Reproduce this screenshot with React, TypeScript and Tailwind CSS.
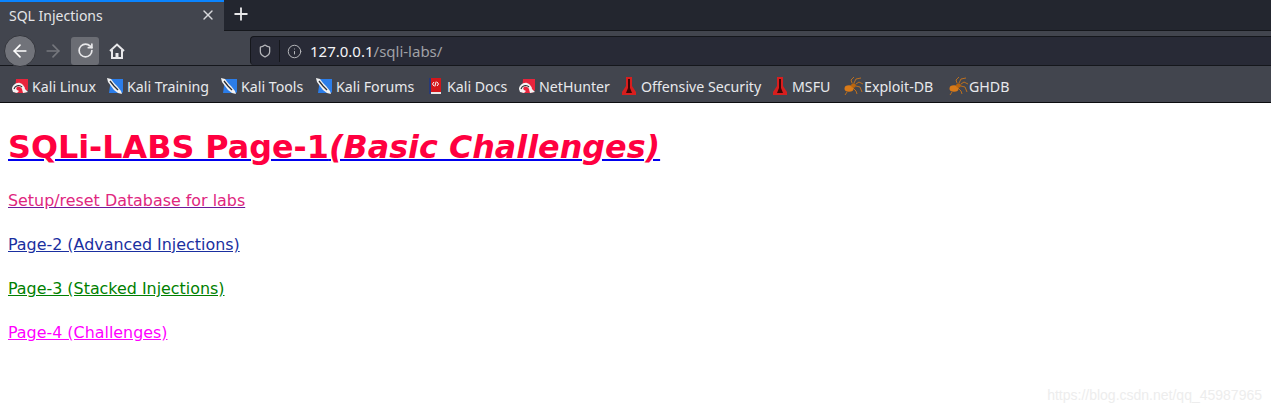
import { ArrowLeft, ArrowRight, Info, Plus, RotateCw, Shield, X } from 'lucide-react';

function KaliRed() {
  return (
    <svg width="16" height="16" viewBox="0 0 16 16">
      <path d="M4 1h12v11l-3 3H3z" fill="#e8243c" />
      <path d="M0 11c0-3 4-7 8-6 3 1 5 4 5 6l3 3-5 1-1-4c-1-2-3-3-5-2-1 1-1 2 0 3l2 1-2 2-4-1z" fill="#f4f4f4" />
      <path d="M2 11c1-3 5-5 8-2" stroke="#2c2c30" strokeWidth="1.1" fill="none" />
    </svg>
  );
}

function KaliBlue() {
  return (
    <svg width="16" height="16" viewBox="0 0 16 16">
      <path d="M4 1h12v13l-1 1H2z" fill="#2b7de9" />
      <path d="M0 0l4 1 3 4 3 3 4 5 1 3-4-1-4-3-3-4-3-4z" fill="#f2f2f2" />
      <path d="M3 3l4 5 4 4" stroke="#2a2d33" strokeWidth="1.3" fill="none" />
    </svg>
  );
}

function KaliDocs() {
  return (
    <svg width="16" height="16" viewBox="0 0 16 16">
      <path d="M2 0h12v15H2z" fill="#d3161b" />
      <path d="M2 0h2v16H2z" fill="#273a78" />
      <path d="M4 14h10v2H4z" fill="#e8e8e8" />
      <path d="M7 4L5.5 6 7 8M10 4l1.5 2L10 8M9.2 3.5L7.8 8.5" stroke="#fff" strokeWidth="1" fill="none" />
    </svg>
  );
}

function OffSec() {
  return (
    <svg width="16" height="18" viewBox="0 0 16 18">
      <path d="M5 0h6v9l4 6v3H1v-3l4-6z" fill="#d81e1e" />
      <path d="M7 2h2v9l2 5H5l2-5z" fill="#3a0808" />
    </svg>
  );
}

function Spider() {
  return (
    <svg width="20" height="18" viewBox="0 0 20 18" className="mr-[-3px]">
      <ellipse cx="6" cy="11.5" rx="4.5" ry="3.2" fill="#d97a18" />
      <ellipse cx="10.5" cy="8.5" rx="2.5" ry="2.3" fill="#b9650f" />
      <path d="M11 6l2-4 5-1M13 7l3-2 4 2M13 9l4 1 2 5M10 11l3 3 1 3M9 6l-1-3 3-3M4 15l-2 3" stroke="#c9741a" strokeWidth="0.9" fill="none" />
    </svg>
  );
}

function HomeIcon() {
  return (
    <svg width="16" height="16" viewBox="0 0 16 16" className="ml-[10px] text-[#e8e8ea]">
      <path d="M1 8l7-6.5L15 8M3 7v8h10V7" stroke="currentColor" strokeWidth="2" fill="none" />
      <path d="M6.5 10h3v4h-3z" fill="currentColor" />
    </svg>
  );
}

const BOOKMARKS = [
  { label: 'Kali Linux', icon: <KaliRed />, width: 'w-[95px]' },
  { label: 'Kali Training', icon: <KaliBlue />, width: 'w-[114px]' },
  { label: 'Kali Tools', icon: <KaliBlue />, width: 'w-[95px]' },
  { label: 'Kali Forums', icon: <KaliBlue />, width: 'w-[111px]' },
  { label: 'Kali Docs', icon: <KaliDocs />, width: 'w-[92px]' },
  { label: 'NetHunter', icon: <KaliRed />, width: 'w-[102px]' },
  { label: 'Offensive Security', icon: <OffSec />, width: 'w-[151px]' },
  { label: 'MSFU', icon: <OffSec />, width: 'w-[71px]' },
  { label: 'Exploit-DB', icon: <Spider />, width: 'w-[105px]' },
  { label: 'GHDB', icon: <Spider />, width: 'w-[70px]' },
];

const LINKS = [
  { label: 'Setup/reset Database for labs', color: 'text-[#e0267f] decoration-[#6a1b9a]' },
  { label: 'Page-2 (Advanced Injections)', color: 'text-[#1a2fa0] decoration-[#1a2fa0]' },
  { label: 'Page-3 (Stacked Injections)', color: 'text-[#008000] decoration-[#008000]' },
  { label: 'Page-4 (Challenges)', color: 'text-[#ff00ff] decoration-[#ff00ff]' },
];

export default function App() {
  return (
    <div className="relative h-[414px] w-[1271px] overflow-hidden bg-white">
      {/* Browser chrome */}
      <div className="font-['Noto_Sans',sans-serif] text-[#f0f0f4]">
        <div className="flex h-[31px] border-b border-[#15171c] bg-[#23262f]">
          <div className="flex h-[31px] w-[224px] items-center justify-between border-t-2 border-[#0a84ff] bg-[#42454e] pb-[3px] pl-[9px] pr-[8px]">
            <span className="text-[14px] text-[#e4e5e8]">SQL Injections</span>
            <X size={16} className="text-[#d8d9dc]" strokeWidth={2} />
          </div>
          <div className="flex w-[33px] items-center justify-center pb-[2px]">
            <Plus size={20} strokeWidth={2.2} className="text-[#e8e8ea]" />
          </div>
        </div>

        <div className="relative z-10 flex h-[35px] items-center border-b border-[#15171c] bg-[#42454e] pt-[5px]">
          <div className="flex w-[250px] items-center">
            <div className="ml-[4px] flex h-[32px] w-[32px] shrink-0 items-center justify-center rounded-full border border-[#34363d] bg-[#71737a]">
              <ArrowLeft size={20} strokeWidth={2} className="text-white" />
            </div>
            <ArrowRight size={20} strokeWidth={2} className="ml-[7px] text-[#75777d]" />
            <div className="ml-[8px] flex h-[28px] w-[28px] items-center justify-center rounded-[3px] bg-[#6b6d74]">
              <RotateCw size={17} strokeWidth={2.4} className="text-[#e8e8ea]" />
            </div>
            <HomeIcon />
          </div>
          <div className="flex h-[29px] flex-1 items-center rounded-l-[4px] border-l border-t border-[#15171c] bg-[#282a36]">
            <Shield size={14} strokeWidth={2.2} className="ml-[7px] text-[#b5b6ba]" />
            <div className="ml-[7px] h-[22px] w-px bg-[#15171c]" />
            <Info size={15} strokeWidth={1.6} className="ml-[7px] text-[#b5b6ba]" />
            <span className="ml-[8px] text-[15px] text-[#f4f4f6]">
              127.0.0.1<span className="text-[#a0a1a6]">/sqli-labs/</span>
            </span>
          </div>
        </div>

        <div className="flex h-[37px] items-center border-b border-[#0c0d0f] bg-[#42454e] pl-[12px] pt-[5px]">
          {BOOKMARKS.map(({ label, icon, width }) => (
            <div key={label} className={`flex shrink-0 items-center gap-[4px] ${width}`}>
              <span className="flex shrink-0">{icon}</span>
              <span className="whitespace-nowrap text-[14.2px] text-[#e8e9ec]">{label}</span>
            </div>
          ))}
        </div>
      </div>

      {/* Page */}
      <div className="px-[8px] pt-[25px] font-['DejaVu_Sans',sans-serif]">
        <h1 className="text-[31.8px] font-bold leading-[37px] text-[#ff0040] underline decoration-[#0000ee] decoration-2">
          SQLi-LABS Page-1<i>(Basic Challenges)</i>
        </h1>
        <div className="mt-[26px] flex flex-col gap-[25px]">
          {LINKS.map(({ label, color }) => (
            <div key={label} className="h-[19px] text-[15.9px] leading-[19px]">
              <span className={`underline ${color}`}>{label}</span>
            </div>
          ))}
        </div>
      </div>

      {/* Watermark */}
      <span className="absolute right-[9px] bottom-[8px] font-['Liberation_Sans',sans-serif] text-[14px] text-[#ededed]">
        https://blog.csdn.net/qq_45987965
      </span>
    </div>
  );
}
